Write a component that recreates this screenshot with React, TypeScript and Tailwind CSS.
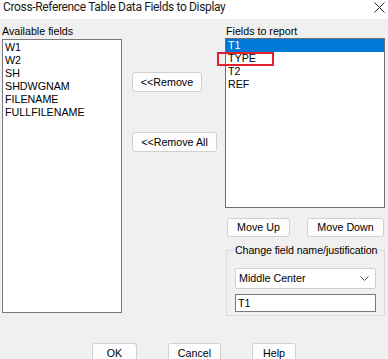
import React from "react";

const AVAILABLE = ["W1", "W2", "SH", "SHDWGNAM", "FILENAME", "FULLFILENAME"];
const REPORT = ["T1", "TYPE", "T2", "REF"];

function Btn({ label, className = "" }: { label: string; className?: string }) {
  return (
    <button
      className={
        "flex items-center justify-center bg-[#fdfdfd] border border-[#d0d0d0] rounded-[3px] text-black text-[10.7px] leading-none whitespace-nowrap " +
        className
      }
    >
      {label}
    </button>
  );
}

export default function App() {
  return (
    <div className="w-[388px] h-[359px] overflow-hidden bg-[#f0f0f0] flex flex-col font-['Liberation_Sans',Arial,sans-serif] text-[10.7px] text-black">
      {/* title bar */}
      <div className="h-[19px] shrink-0 bg-white flex items-start justify-between pl-[3px] pr-[3px]">
        <span className="text-[12px] leading-[15px] text-[#1a1a1a] font-['Roboto',sans-serif] tracking-[-0.35px]">
          Cross-Reference Table Data Fields to Display
        </span>
        <svg width="11" height="11" viewBox="0 0 11 11" className="mt-[2px]">
          <path d="M0.5 0.5 L10.5 10.5 M10.5 0.5 L0.5 10.5" stroke="#222" strokeWidth="1" />
        </svg>
      </div>

      <div className="flex pt-[6px]">
        {/* left column */}
        <div className="ml-[2px] w-[120px] flex flex-col">
          <div className="h-[13px] leading-[13px]">Available fields</div>
          <div className="h-[274px] mt-[1px] bg-white border border-[#7a7a7a] pl-[2px] pt-[1px]">
            {AVAILABLE.map((f) => (
              <div key={f} className="h-[13px] leading-[13px]">
                {f}
              </div>
            ))}
          </div>
        </div>

        {/* middle buttons */}
        <div className="w-[103px] pl-[10px] pt-[47px] flex flex-col items-start">
          <Btn label="<<Remove" className="w-[70px] h-[20px]" />
          <Btn label="<<Remove All" className="w-[85px] h-[20px] mt-[40px]" />
        </div>

        {/* right column */}
        <div className="w-[160px] flex flex-col">
          <div className="h-[13px] leading-[13px] ml-[1px]">Fields to report</div>
          <div className="relative h-[170px] bg-white border border-[#6e6e6e]">
            {REPORT.map((f, i) => (
              <div
                key={f}
                className={
                  i === 0
                    ? "h-[13px] leading-[13px] pl-[2px] bg-[#0078d7] text-white"
                    : "h-[13px] leading-[13px] pl-[2px]"
                }
              >
                {f}
              </div>
            ))}
            <div className="absolute left-[-9px] top-[13px] w-[57px] h-[14px] border-2 border-[#e5202e]" />
          </div>

          <div className="flex mt-[10px]">
            <Btn label="Move Up" className="ml-[2px] w-[63px] h-[19px]" />
            <Btn label="Move Down" className="ml-[17px] w-[77px] h-[19px]" />
          </div>

          <fieldset className="ml-[1px] w-[159px] mt-[7px] border border-[#dcdcdc] pl-[8px] pb-[3px] min-w-0">
            <legend className="ml-[-2px] px-[2px] leading-[13px] whitespace-nowrap tracking-[-0.1px]">
              Change field name/justification
            </legend>
            <div className="mt-[11px] w-[141px] h-[21px] bg-white border border-[#d0d0d0] rounded-[2px] flex items-center justify-between pl-[3px] pr-[6px]">
              <span className="leading-none">Middle Center</span>
              <svg width="9" height="5" viewBox="0 0 9 5">
                <path d="M0.5 0.5 L4.5 4.5 L8.5 0.5" fill="none" stroke="#555" strokeWidth="1" />
              </svg>
            </div>
            <div className="mt-[5px] w-[141px] h-[18px] bg-white border border-[#7a7a7a] flex items-center pl-[2px]">
              <span className="leading-none">T1</span>
            </div>
          </fieldset>
        </div>
      </div>

      {/* bottom buttons */}
      <div className="flex mt-[27px]">
        <Btn label="OK" className="ml-[92px] w-[45px] h-[21px] border-[#0067c0]" />
        <Btn label="Cancel" className="ml-[31px] w-[53px] h-[21px]" />
        <Btn label="Help" className="ml-[31px] w-[44px] h-[21px]" />
      </div>
    </div>
  );
}
